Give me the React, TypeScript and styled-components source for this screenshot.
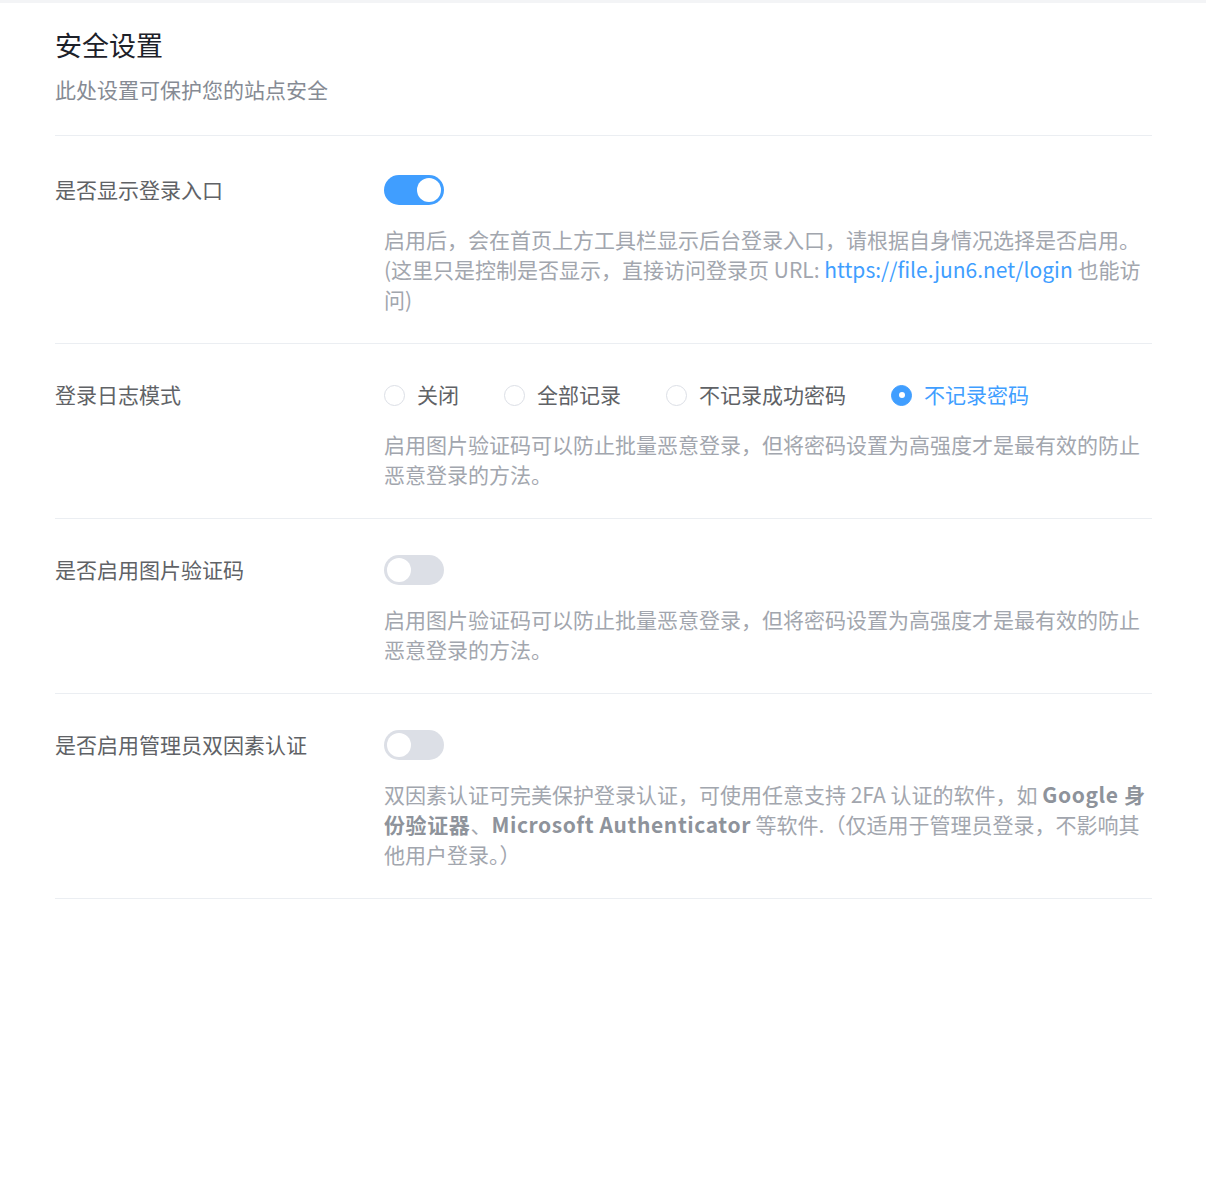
import React, { useState } from 'react';
import styled, { createGlobalStyle } from 'styled-components';

const GlobalStyle = createGlobalStyle`
  html, body {
    margin: 0;
    padding: 0;
    background: #ffffff;
  }
  body {
    font-family: "Noto Sans CJK SC", sans-serif;
    -webkit-font-smoothing: antialiased;
  }
`;

const TopStrip = styled.div`
  height: 3px;
  background: #f3f4f6;
`;

const Page = styled.div`
  padding: 0 54px 0 55px;
  min-height: 1201px;
  box-sizing: border-box;
`;

const Header = styled.div`
  padding: 22px 0 31px;
  border-bottom: 1px solid #ebeef2;
`;

const Title = styled.div`
  font-size: 27px;
  line-height: 40px;
  color: #1d2129;
`;

const Subtitle = styled.div`
  margin-top: 9px;
  font-size: 21px;
  line-height: 30px;
  color: #868b94;
`;

const List = styled.div`
  padding-top: 3px;
`;

const Row = styled.div`
  display: grid;
  grid-template-columns: 329px 1fr;
  padding: 36px 0 29px;
  border-bottom: 1px solid #ebeef2;
`;

const Label = styled.div`
  font-size: 21px;
  line-height: 28px;
  color: #606266;
`;

const Control = styled.div`
  display: flex;
  flex-direction: column;
  align-items: flex-start;
`;

const Desc = styled.div`
  margin-top: 19px;
  font-size: 21px;
  line-height: 30px;
  color: #a2a6ae;

  b {
    color: #8e939b;
    font-weight: 700;
    letter-spacing: 0.6px;
  }
`;

const Link = styled.a`
  color: #409eff;
  text-decoration: none;
`;

const SwitchTrack = styled.button<{ $on: boolean }>`
  position: relative;
  width: 60px;
  height: 30px;
  border: none;
  padding: 0;
  border-radius: 15px;
  cursor: pointer;
  background: ${(p) => (p.$on ? '#409eff' : '#dcdfe6')};
`;

const SwitchKnob = styled.span<{ $on: boolean }>`
  position: absolute;
  top: 3px;
  left: ${(p) => (p.$on ? '33px' : '3px')};
  width: 24px;
  height: 24px;
  border-radius: 50%;
  background: #ffffff;
`;

const RadioGroup = styled.div`
  display: flex;
  align-items: center;
  height: 30px;
  gap: 45px;
`;

const RadioItem = styled.label<{ $checked: boolean }>`
  display: flex;
  align-items: center;
  gap: 12px;
  cursor: pointer;
  font-size: 21px;
  line-height: 30px;
  color: ${(p) => (p.$checked ? '#409eff' : '#606266')};
`;

const RadioText = styled.span`
  line-height: 28px;
  margin-bottom: 2px;
`;

const RadioDot = styled.span<{ $checked: boolean }>`
  box-sizing: border-box;
  width: 21px;
  height: 21px;
  border-radius: 50%;
  border: 1.5px solid ${(p) => (p.$checked ? '#409eff' : '#dcdfe6')};
  background: ${(p) => (p.$checked ? '#409eff' : '#ffffff')};
  display: flex;
  align-items: center;
  justify-content: center;

  &::after {
    content: '';
    width: 6px;
    height: 6px;
    border-radius: 50%;
    background: #ffffff;
    display: ${(p) => (p.$checked ? 'block' : 'none')};
  }
`;

const Switch = ({ on, onChange }: { on: boolean; onChange: (v: boolean) => void }) => (
  <SwitchTrack $on={on} onClick={() => onChange(!on)}>
    <SwitchKnob $on={on} />
  </SwitchTrack>
);

const logModes = ['关闭', '全部记录', '不记录成功密码', '不记录密码'];

const App = () => {
  const [showLogin, setShowLogin] = useState(true);
  const [logMode, setLogMode] = useState('不记录密码');
  const [captcha, setCaptcha] = useState(false);
  const [twoFactor, setTwoFactor] = useState(false);

  return (
    <>
      <GlobalStyle />
      <TopStrip />
      <Page>
        <Header>
          <Title>安全设置</Title>
          <Subtitle>此处设置可保护您的站点安全</Subtitle>
        </Header>
        <List>
          <Row>
            <Label>是否显示登录入口</Label>
            <Control>
              <Switch on={showLogin} onChange={setShowLogin} />
              <Desc>
                启用后，会在首页上方工具栏显示后台登录入口，请根据自身情况选择是否启用。(这里只是控制是否显示，直接访问登录页 URL:{' '}
                <Link href="#">https://file.jun6.net/login</Link> 也能访问)
              </Desc>
            </Control>
          </Row>
          <Row>
            <Label>登录日志模式</Label>
            <Control>
              <RadioGroup>
                {logModes.map((m) => (
                  <RadioItem key={m} $checked={logMode === m} onClick={() => setLogMode(m)}>
                    <RadioDot $checked={logMode === m} />
                    <RadioText>{m}</RadioText>
                  </RadioItem>
                ))}
              </RadioGroup>
              <Desc>启用图片验证码可以防止批量恶意登录，但将密码设置为高强度才是最有效的防止恶意登录的方法。</Desc>
            </Control>
          </Row>
          <Row>
            <Label>是否启用图片验证码</Label>
            <Control>
              <Switch on={captcha} onChange={setCaptcha} />
              <Desc>启用图片验证码可以防止批量恶意登录，但将密码设置为高强度才是最有效的防止恶意登录的方法。</Desc>
            </Control>
          </Row>
          <Row>
            <Label>是否启用管理员双因素认证</Label>
            <Control>
              <Switch on={twoFactor} onChange={setTwoFactor} />
              <Desc>
                双因素认证可完美保护登录认证，可使用任意支持 2FA 认证的软件，如 <b>Google 身份验证器</b>、<b>Microsoft Authenticator</b> 等软件.（仅适用于管理员登录，不影响其他用户登录。）
              </Desc>
            </Control>
          </Row>
        </List>
      </Page>
    </>
  );
};

export default App;
